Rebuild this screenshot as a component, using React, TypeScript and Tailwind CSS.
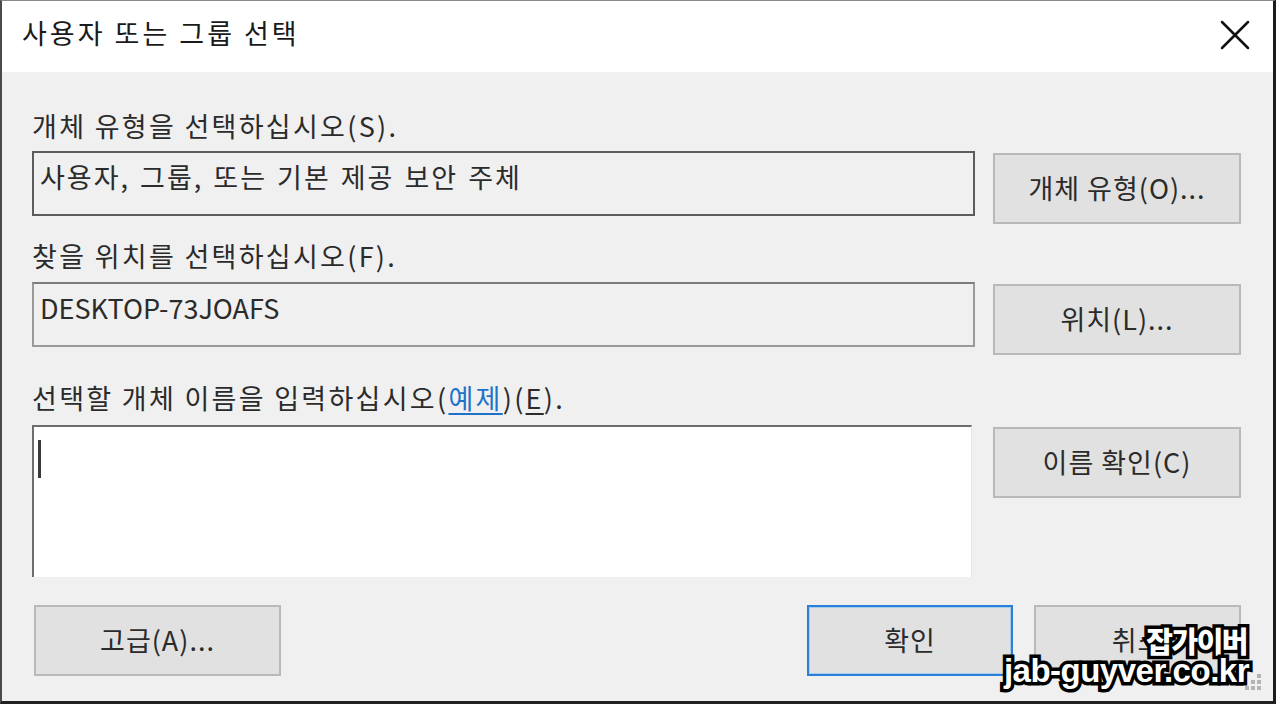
import { X } from "lucide-react"

const font = "font-['Noto_Sans_CJK_KR','Noto_Sans',sans-serif]"

function DlgButton({ label, primary = false, className = "" }: { label: React.ReactNode; primary?: boolean; className?: string }) {
  return (
    <button
      className={`h-[71px] flex items-center justify-center bg-[#e1e1e1] text-[27px] tracking-[1px] text-[#2b2b2b] ${
        primary ? "border-2 border-[#2b7fd6] shadow-[inset_0_0_0_1px_#a9cdef]" : "border-2 border-[#b9b9b9]"
      } ${className}`}
    >
      {label}
    </button>
  )
}

function Label({ children, className = "" }: { children: React.ReactNode; className?: string }) {
  return <div className={`h-[36px] leading-[36px] text-[27px] tracking-[2.3px] text-[#2b2b2b] ${className}`}>{children}</div>
}

function ResizeGrip() {
  return (
    <svg width="20" height="20" viewBox="0 0 20 20" className="text-[#b4b4b4]">
      {[
        [14, 2],
        [8, 8],
        [14, 8],
        [2, 14],
        [8, 14],
        [14, 14],
      ].map(([x, y], i) => (
        <rect key={i} x={x} y={y} width="4" height="4" fill="currentColor" />
      ))}
    </svg>
  )
}

export default function App() {
  return (
    <div className={`w-[1280px] h-[709px] bg-white ${font}`}>
      <div className="relative w-[1276px] h-[704px] flex flex-col border-t border-t-[#8a8a8a] border-l-2 border-l-[#4a4a4a] border-r-[3px] border-r-[#1c1c1c] border-b-[3px] border-b-[#222]">
        {/* title bar */}
        <div className="h-[71px] shrink-0 bg-white flex items-center justify-between pl-[20px] pr-[12px]">
          <span className="text-[27px] tracking-[3px] text-[#1a1a1a] -mt-[6px]">사용자 또는 그룹 선택</span>
          <X className="w-[52px] h-[52px] text-[#111] -mt-[3px]" strokeWidth={1.15} />
        </div>

        {/* body */}
        <div className="flex-1 bg-[#f0f0f0] pl-[30px] pr-[32px] flex flex-col">
          <Label className="mt-[36px] mb-[7px]">개체 유형을 선택하십시오(S).</Label>
          <div className="flex gap-[18px] h-[72px]">
            <div className="w-[943px] h-[65px] border-2 border-[#5c5c5c] bg-[#f0f0f0] px-[6px] leading-[48px] text-[27px] tracking-[2px] [word-spacing:2px] text-[#2b2b2b]">
              사용자, 그룹, 또는 기본 제공 보안 주체
            </div>
            <DlgButton label="개체 유형(O)..." className="mt-[2px] w-[248px] h-[70px]" />
          </div>

          <Label className="mt-[15px] mb-[8px]">찾을 위치를 선택하십시오(F).</Label>
          <div className="flex gap-[18px] h-[72px]">
            <div className="w-[943px] h-[65px] border-2 border-[#9a9a9a] border-t-[#7c7c7c] bg-[#f0f0f0] px-[6px] leading-[48px] text-[27px] text-[#2b2b2b]">
              DESKTOP-73JOAFS
            </div>
            <DlgButton label="위치(L)..." className="mt-[2px] w-[248px] h-[70px]" />
          </div>

          <Label className="mt-[26px] mb-[9px]">
            선택할 개체 이름을 입력하십시오(
            <span className="text-[#1e73c8] underline underline-offset-4">예제</span>)(<span className="underline underline-offset-4">E</span>).
          </Label>
          <div className="flex gap-[21px] h-[152px]">
            <div className="w-[940px] h-[152px] bg-white border-t-2 border-l-2 border-t-[#6e6e6e] border-l-[#6e6e6e] border-r border-r-[#e6e6e6] pl-[4px] pt-[13px]">
              <div className="w-[3px] h-[38px] bg-[#3a3a3a]" />
            </div>
            <DlgButton label="이름 확인(C)" className="mt-[2px] w-[248px] h-[70px]" />
          </div>

          <div className="mt-[28px] flex items-start">
            <DlgButton label="고급(A)..." className="ml-[2px] w-[247px]" />
            <div className="flex-1" />
            <DlgButton label="확인" primary className="w-[206px]" />
            <DlgButton label="취소" className="ml-[21px] w-[207px]" />
          </div>
        </div>

        <div className="absolute right-[10px] bottom-[9px]">
          <ResizeGrip />
        </div>

        {/* watermark */}
        <div className="absolute right-[24px] bottom-[14px] flex flex-col items-end leading-none font-black text-white [-webkit-text-stroke:7px_#000] [paint-order:stroke_fill]">
          <span className="text-[29px] tracking-[-1.5px] mr-[2px]">잡가이버</span>
          <span className="text-[33px] tracking-[-0.5px] -mt-[1px] font-['Liberation_Sans',sans-serif] font-bold">jab-guyver.co.kr</span>
        </div>
      </div>
    </div>
  )
}
